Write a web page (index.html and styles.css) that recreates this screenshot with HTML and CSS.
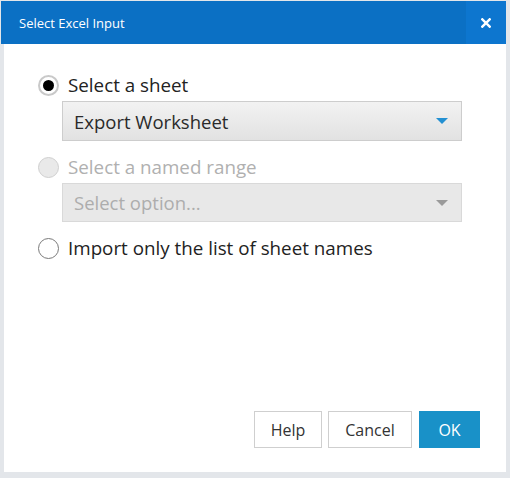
FILE: index.html
```html
<!DOCTYPE html>
<html lang="en">
<head>
    <meta charset="UTF-8">
    <title>Select Excel Input</title>
    <link rel="stylesheet" href="styles.css">
</head>
<body>
    <div class="dialog">
        <div class="titlebar">
            <span class="title">Select Excel Input</span>
            <button class="close" type="button" aria-label="Close">
                <svg width="10" height="10" viewBox="0 0 10 10">
                    <path d="M1.3 1.3 L8.7 8.7 M8.7 1.3 L1.3 8.7" stroke="#fff" stroke-width="2.4" stroke-linecap="square"/>
                </svg>
            </button>
        </div>
        <div class="content">
            <form class="options" autocomplete="off">
                <label class="option">
                    <input type="radio" name="source" checked>
                    <span>Select a sheet</span>
                </label>
                <div class="select">
                    <span>Export Worksheet</span>
                    <i class="caret"></i>
                </div>

                <label class="option disabled">
                    <input type="radio" name="source" disabled>
                    <span>Select a named range</span>
                </label>
                <div class="select disabled">
                    <span>Select option...</span>
                    <i class="caret"></i>
                </div>

                <label class="option">
                    <input type="radio" name="source">
                    <span>Import only the list of sheet names</span>
                </label>
            </form>
            <div class="footer">
                <button type="button" class="btn help">Help</button>
                <button type="button" class="btn cancel">Cancel</button>
                <button type="button" class="btn primary">OK</button>
            </div>
        </div>
    </div>
</body>
</html>
```

FILE: styles.css
```css
body {
    margin: 0;
    background: #e3e6ea;
    font-family: 'Open Sans', 'Noto Sans', Arial, sans-serif;
}
.dialog {
    width: 505px;
    height: 471px;
    margin: 1px 0 0 1px;
    display: flex;
    flex-direction: column;
}
.titlebar {
    height: 43px;
    background: #0b70c4;
    display: flex;
    align-items: center;
    justify-content: space-between;
    padding-left: 18px;
}
.title {
    color: #fff;
    font-size: 13px;
}
.close {
    width: 40px;
    height: 43px;
    border: none;
    padding: 0;
    background: #0d76cf;
    display: flex;
    align-items: center;
    justify-content: center;
}
.content {
    flex: 1;
    margin: 0 0 0 3px;
    background: #fff;
    display: flex;
    flex-direction: column;
    justify-content: space-between;
    padding: 29px 26px 24px 34px;
}
.options {
    display: flex;
    flex-direction: column;
}
.option {
    display: flex;
    align-items: center;
    gap: 9px;
    height: 24px;
    font-size: 18.8px;
    color: #222;
}
.option + .select {
    margin-top: 4px;
}
.select + .option {
    margin-top: 14px;
}
.option input {
    appearance: none;
    margin: 0;
    width: 21px;
    height: 21px;
    border: 1.5px solid #7a7a7a;
    border-radius: 50%;
    background: #fff;
    display: flex;
    align-items: center;
    justify-content: center;
}
.option input:checked {
    border: 2px solid #c9c9c9;
}
.option input:checked::after {
    content: "";
    width: 11px;
    height: 11px;
    border-radius: 50%;
    background: #000;
}
.option.disabled {
    color: #b0b0b0;
}
.option.disabled input {
    border: 1.5px solid #cfcfcf;
    background: #e9e9e9;
}
.select {
    margin-left: 24px;
    width: 400px;
    height: 40px;
    box-sizing: border-box;
    border: 1px solid #cdcdcd;
    background: linear-gradient(#f2f2f2, #e2e2e2);
    display: flex;
    align-items: center;
    justify-content: space-between;
    padding: 0 13px 0 11px;
    font-size: 18.5px;
    color: #2a2a2a;
}
.caret {
    width: 0;
    height: 0;
    border-left: 6.5px solid transparent;
    border-right: 6.5px solid transparent;
    border-top: 6px solid #2390d2;
}
.select.disabled {
    background: #e8e8e8;
    border-color: #d9d9d9;
    color: #adadad;
    height: 39px;
}
.select.disabled .caret {
    border-top-color: #9a9a9a;
}
.footer {
    display: flex;
    justify-content: flex-end;
    gap: 6px;
}
.btn {
    height: 37px;
    padding: 0;
    border: 1px solid #cfcfcf;
    background: #fff;
    font-family: inherit;
    font-size: 16px;
    color: #333;
}
.btn.help {
    width: 68px;
}
.btn.cancel {
    width: 84px;
}
.btn.primary {
    width: 61px;
    margin-left: 1px;
    background: #1991c8;
    border-color: #1991c8;
    color: #fff;
}
```
